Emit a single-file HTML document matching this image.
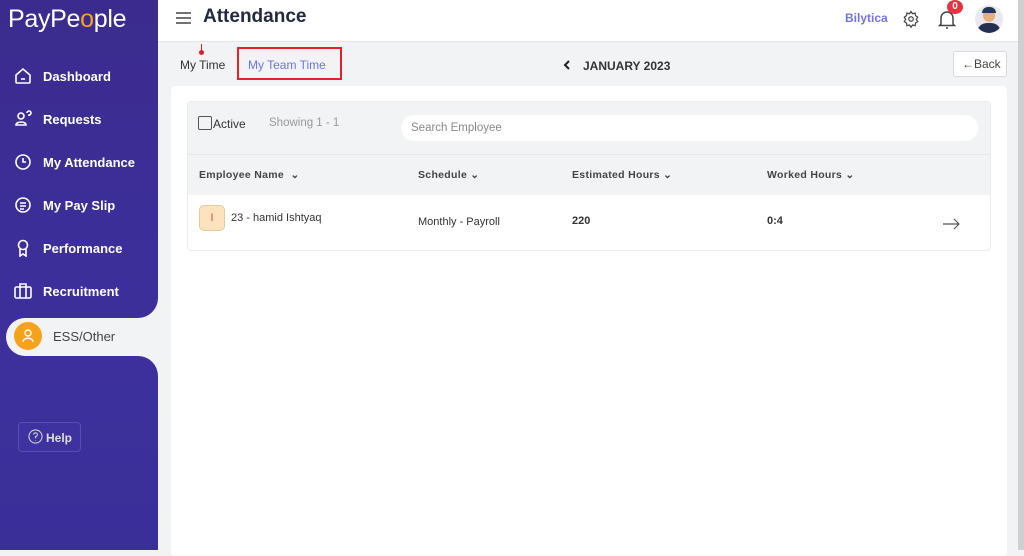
<!DOCTYPE html>
<html><head><meta charset="utf-8"><style>
*{box-sizing:border-box;margin:0;padding:0}
body{width:1024px;height:550px;overflow:hidden;font-family:"Liberation Sans",sans-serif;background:#f2f3f5;position:relative;color:#333}
.sb{position:absolute;left:0;top:0;width:158px;height:550px;background:linear-gradient(180deg,#3b2b8e,#3d309d 60%,#3a2f99);}
.logo{position:absolute;left:8px;top:5px;color:#fff;font-size:25px;font-weight:normal;letter-spacing:-0.3px}
.nav{position:absolute;left:14px;color:#fff;font-size:13px;font-weight:bold;display:flex;align-items:center}
.nav svg{margin-right:11px}
.abs{position:absolute}
.t{position:absolute;white-space:nowrap}
</style></head><body>
<div class="sb"></div>
<div class="abs" style="left:120px;top:298px;width:38px;height:80px;background:#f2f3f5"></div>
<div class="abs" style="left:0;top:290px;width:158px;height:28px;background:#3d2f9a;border-bottom-right-radius:20px"></div>
<div class="abs" style="left:0;top:356px;width:158px;height:30px;background:#3d309c;border-top-right-radius:20px"></div>
<div class="abs" style="left:6px;top:318px;width:152px;height:38px;background:#f2f3f5;border-radius:19px 0 0 19px"></div>
<div class="logo">PayPe<span style="color:#f7a21b">o</span>ple</div>
<div class="nav" style="top:67px"><svg width="18" height="18" viewBox="0 0 18 18" fill="none" stroke="#fff" stroke-width="1.6"><path d="M2 8 9 2l7 6v7a1 1 0 0 1-1 1H3a1 1 0 0 1-1-1z"/><path d="M7 12h4"/></svg>Dashboard</div>
<div class="nav" style="top:110px"><svg width="18" height="18" viewBox="0 0 18 18" fill="none" stroke="#fff" stroke-width="1.6"><circle cx="7" cy="6" r="3"/><path d="M2 15c0-4 10-4 10 0z"/><path d="M13 3a2 2 0 1 1 2 2v1"/></svg>Requests</div>
<div class="nav" style="top:153px"><svg width="18" height="18" viewBox="0 0 18 18" fill="none" stroke="#fff" stroke-width="1.6"><circle cx="9" cy="9" r="7"/><path d="M9 5v4h3"/></svg>My Attendance</div>
<div class="nav" style="top:196px"><svg width="18" height="18" viewBox="0 0 18 18" fill="none" stroke="#fff" stroke-width="1.6"><circle cx="9" cy="9" r="7"/><path d="M6 7h6M6 10h6M6 13h4"/></svg>My Pay Slip</div>
<div class="nav" style="top:239px"><svg width="18" height="18" viewBox="0 0 18 18" fill="none" stroke="#fff" stroke-width="1.6"><circle cx="9" cy="6" r="4.5"/><path d="M6 10v7l3-2 3 2v-7"/></svg>Performance</div>
<div class="nav" style="top:282px"><svg width="18" height="18" viewBox="0 0 18 18" fill="none" stroke="#fff" stroke-width="1.6"><rect x="1" y="5" width="16" height="11" rx="1.5"/><path d="M6 5V2h6v3M6 5v11M12 5v11"/></svg>Recruitment</div>
<div class="abs" style="left:14px;top:322px;width:28px;height:28px;border-radius:50%;background:#f7a21b"></div>
<svg class="abs" style="left:20px;top:328px" width="16" height="16" viewBox="0 0 16 16" fill="none" stroke="#fff" stroke-width="1.4"><circle cx="8" cy="5" r="3"/><path d="M3 14c0-5 10-5 10 0"/></svg>
<div class="t" style="left:53px;top:329px;font-size:13px;color:#444">ESS/Other</div>
<div class="abs" style="left:18px;top:422px;width:63px;height:30px;border:1px solid #5a4fb0;border-radius:4px;background:#3e32a0"></div>
<svg class="abs" style="left:28px;top:429px" width="15" height="15" viewBox="0 0 16 16" fill="none" stroke="#ccc" stroke-width="1.2"><circle cx="8" cy="8" r="7"/><path d="M6 6a2 2 0 1 1 2 2v2M8 12v.5"/></svg>
<div class="t" style="left:46px;top:431px;font-size:12px;color:#ddd;font-weight:bold">Help</div>

<div class="abs" style="left:158px;top:0;width:866px;height:42px;background:#fff;border-bottom:1px solid #e6e6ea"></div>
<svg class="abs" style="left:176px;top:12px" width="15" height="12" viewBox="0 0 15 12" stroke="#444" stroke-width="1.5"><path d="M0 1h15M0 6h15M0 11h15"/></svg>
<div class="t" style="left:203px;top:6px;font-size:19px;font-weight:bold;color:#222a3e">Attendance</div>
<div class="t" style="left:845px;top:11px;font-size:12px;font-weight:bold;color:#7273dd">Bilytica</div>
<svg class="abs" style="left:902px;top:10px" width="18" height="18" viewBox="0 0 24 24" fill="none" stroke="#444" stroke-width="1.6"><circle cx="12" cy="12" r="3"/><path d="M12 2l2 3 3.5-1 .5 3.5 3 2-2 3 2 3-3 2-.5 3.5-3.5-1-2 3-2-3-3.5 1-.5-3.5-3-2 2-3-2-3 3-2 .5-3.5 3.5 1z"/></svg>
<svg class="abs" style="left:938px;top:9px" width="18" height="20" viewBox="0 0 18 20" fill="none" stroke="#444" stroke-width="1.5"><path d="M3 15V9a6 6 0 0 1 12 0v6l1.5 1.5h-15z"/><path d="M8 19h2"/></svg>
<div class="abs" style="left:947px;top:0;width:16px;height:14px;border-radius:50%;background:#e8323f;color:#fff;font-size:10px;font-weight:bold;text-align:center;line-height:14px">0</div>
<div class="abs" style="left:975px;top:5px;width:28px;height:28px;border-radius:50%;background:#e8e8ee;overflow:hidden">
<div class="abs" style="left:8px;top:4px;width:12px;height:13px;border-radius:50%;background:#e7b07a"></div>
<div class="abs" style="left:7px;top:2px;width:14px;height:6px;border-radius:6px 6px 0 0;background:#2b3553"></div>
<div class="abs" style="left:2px;top:18px;width:24px;height:14px;border-radius:10px 10px 0 0;background:#23304f"></div>
</div>
<div class="abs" style="left:1018px;top:0;width:6px;height:550px;background:#cfcfd2"></div>

<div class="abs" style="left:201px;top:44px;width:1px;height:6px;background:#e02020"></div>
<div class="abs" style="left:199px;top:50px;width:5px;height:5px;border-radius:50%;background:#e02020"></div>
<div class="t" style="left:180px;top:58px;font-size:12px;color:#333">My Time</div>
<div class="abs" style="left:237px;top:47px;width:105px;height:33px;border:2px solid #e8202a"></div>
<div class="t" style="left:248px;top:58px;font-size:12px;color:#6f74e0">My Team Time</div>
<svg class="abs" style="left:563px;top:60px" width="8" height="10" viewBox="0 0 8 10" fill="none" stroke="#222" stroke-width="2"><path d="M6 1 2 5l4 4"/></svg>
<div class="t" style="left:583px;top:59px;font-size:12px;font-weight:bold;color:#333">JANUARY 2023</div>
<div class="abs" style="left:953px;top:51px;width:54px;height:26px;background:#fff;border:1px solid #d8d8dc;border-radius:3px"></div>
<div class="t" style="left:962px;top:57px;font-size:12px;color:#444">←Back</div>

<div class="abs" style="left:171px;top:86px;width:836px;height:470px;background:#fff;border-radius:4px"></div>
<div class="abs" style="left:187px;top:101px;width:804px;height:150px;border:1px solid #ececef;border-radius:4px;overflow:hidden">
 <div class="abs" style="left:0;top:0;width:804px;height:93px;background:#f2f3f5"></div>
 <div class="abs" style="left:0;top:52px;width:804px;height:1px;background:#e6e7ea"></div>
</div>
<div class="abs" style="left:198px;top:116px;width:14px;height:14px;border:1.5px solid #555;border-radius:2px"></div>
<div class="t" style="left:213px;top:117px;font-size:12px;color:#333">Active</div>
<div class="t" style="left:269px;top:117px;font-size:11.5px;color:#999">Showing 1 - 1</div>
<div class="abs" style="left:401px;top:115px;width:577px;height:26px;background:#fff;border-radius:13px"></div>
<div class="t" style="left:411px;top:122px;font-size:11.5px;color:#888">Search Employee</div>
<div class="t" style="left:199px;top:169px;font-size:10.5px;font-weight:bold;color:#444;letter-spacing:.3px">Employee Name &nbsp;⌄</div>
<div class="t" style="left:418px;top:169px;font-size:10.5px;font-weight:bold;color:#444;letter-spacing:.3px">Schedule ⌄</div>
<div class="t" style="left:572px;top:169px;font-size:10.5px;font-weight:bold;color:#444;letter-spacing:.3px">Estimated Hours ⌄</div>
<div class="t" style="left:767px;top:169px;font-size:10.5px;font-weight:bold;color:#444;letter-spacing:.3px">Worked Hours ⌄</div>
<div class="abs" style="left:199px;top:205px;width:26px;height:26px;background:#fde3bd;border:1px solid #e8c9a0;border-radius:5px;color:#e04040;font-size:11px;text-align:center;line-height:24px">I</div>
<div class="t" style="left:231px;top:212px;font-size:11px;color:#333">23 - hamid Ishtyaq</div>
<div class="t" style="left:418px;top:216px;font-size:11px;color:#333">Monthly - Payroll</div>
<div class="t" style="left:572px;top:215px;font-size:11px;font-weight:bold;color:#333">220</div>
<div class="t" style="left:767px;top:215px;font-size:11px;font-weight:bold;color:#333">0:4</div>
<svg class="abs" style="left:943px;top:218px" width="17" height="12" viewBox="0 0 17 12" fill="none" stroke="#555" stroke-width="1.2"><path d="M0 6h16M11 1l5 5-5 5"/></svg>
</body></html>
